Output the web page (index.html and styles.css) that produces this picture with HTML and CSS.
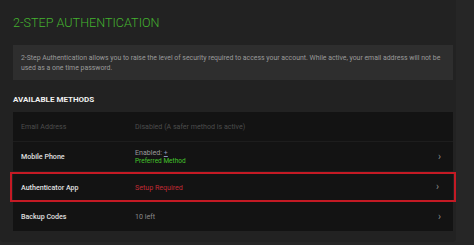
FILE: index.html
```html
<!DOCTYPE html>
<html lang="en">
<head>
  <meta charset="UTF-8">
  <meta name="viewport" content="width=device-width, initial-scale=1.0">
  <title>2-Step Authentication</title>
  <link rel="stylesheet" href="styles.css">
</head>
<body>
  <div class="panel">
    <h1>2-STEP AUTHENTICATION</h1>
    <div class="info">
      2-Step Authentication allows you to raise the level of security required to access your account. While active, your email address will not be used as a one time password.
    </div>
    <h2>AVAILABLE METHODS</h2>
    <div class="methods">
      <div class="row disabled">
        <div class="name">Email Address</div>
        <div class="status">Disabled (A safer method is active)</div>
      </div>
      <div class="row">
        <div class="name">Mobile Phone</div>
        <div class="status">
          <div>Enabled: <span class="phone">+</span></div>
          <div class="preferred">Preferred Method</div>
        </div>
        <span class="chev">&rsaquo;</span>
      </div>
      <div class="row highlight">
        <div class="name">Authenticator App</div>
        <div class="status required">Setup Required</div>
        <span class="chev">&rsaquo;</span>
      </div>
      <div class="row">
        <div class="name">Backup Codes</div>
        <div class="status muted">10 left</div>
        <span class="chev">&rsaquo;</span>
      </div>
    </div>
  </div>
</body>
</html>
```

FILE: styles.css
```css
:root {
  --bg: #262626;
  --panel-bg: #222222;
  --info-bg: #2e2e2e;
  --table-bg: #131313;
  --line: #1d1d1d;
  --green: #44b22f;
  --green-bright: #44c42c;
  --red: #c41a24;
  --text-main: #e0e0e0;
  --text-secondary: #9a9a9a;
}
*, *::before, *::after { box-sizing: border-box; }
body {
  margin: 0;
  background: var(--bg);
  font-family: Roboto, "Liberation Sans", sans-serif;
  color: var(--text-main);
}
.panel {
  width: 456px;
  background: var(--panel-bg);
  padding: 13px 3px 11px 13px;
  border-radius: 0 0 4px 4px;
}
h1 {
  margin: 0 0 12px;
  font-size: 12.6px;
  line-height: 20px;
  font-weight: 300;
  color: var(--green);
}
.info {
  background: var(--info-bg);
  padding: 8px 8px 7px;
  font-size: 6.9px;
  line-height: 10px;
  color: var(--text-secondary);
  height: 35px;
}
h2 {
  margin: 0;
  padding: 14px 0 6px;
  font-size: 8px;
  line-height: 12px;
  font-weight: 700;
  color: #f0f0f0;
}
.methods { background: var(--table-bg); }
.row {
  display: flex;
  align-items: center;
  height: 30px;
  padding: 0 12px 0 8px;
  border-bottom: 1px solid var(--line);
  font-size: 7.1px;
}
.row:last-child { border-bottom: 0; height: 29px; }
.name { width: 114px; font-weight: 500; color: var(--text-main); }
.status { flex: 1; color: var(--text-secondary); line-height: 9px; }
.disabled .name, .disabled .status { color: #4c4c4c; font-weight: 400; }
.phone { color: #8a93b8; text-decoration: underline; }
.preferred { color: var(--green-bright); font-size: 6.5px; }
.required { color: #c02a34; }
.muted { color: #8a8a8a; }
.highlight {
  margin: 0 -3px;
  padding: 0 15px 0 9px;
  border: 2px solid var(--red);
}
.chev { color: #8a8a8a; font-size: 10px; line-height: 10px; }
```
